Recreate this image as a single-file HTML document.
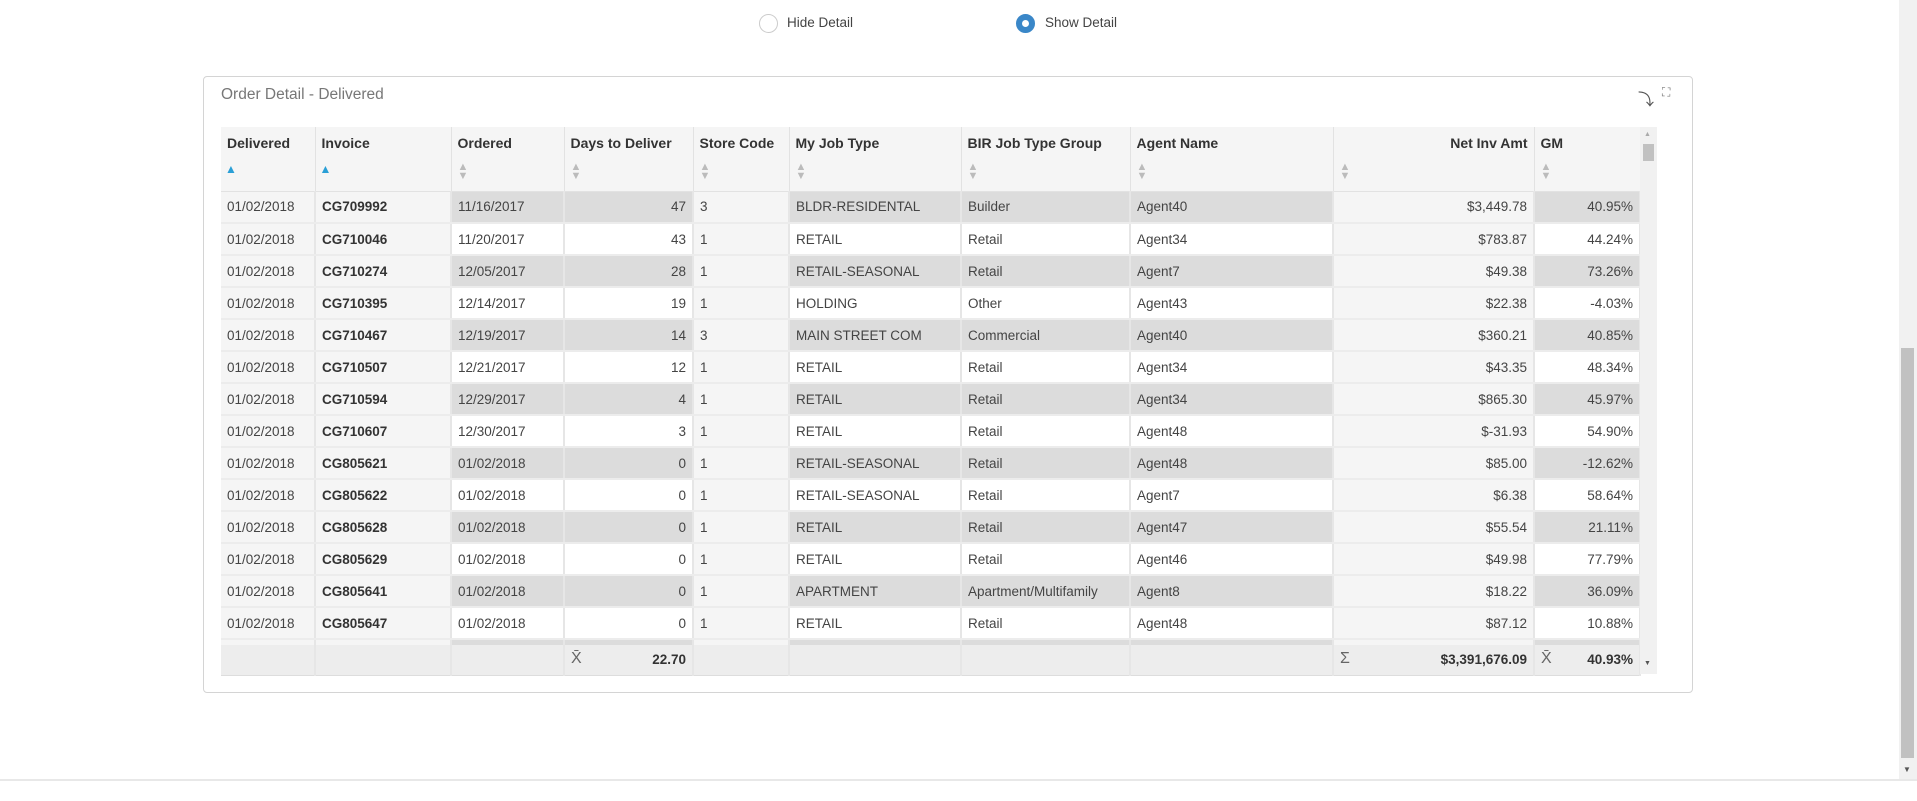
<!DOCTYPE html>
<html><head><meta charset="utf-8"><style>
*{box-sizing:border-box;margin:0;padding:0}
body{width:1917px;height:801px;background:#fff;font-family:"Liberation Sans",sans-serif;position:relative;overflow:hidden;color:#444}
.radio{position:absolute;top:14px;width:19px;height:19px;border-radius:50%;border:1px solid #ccc;background:#fff}
.radio.on{background:#3a87c8;border-color:#3a87c8}
.radio.on::after{content:"";position:absolute;left:5px;top:5px;width:7px;height:7px;border-radius:50%;background:#fff}
.rl{position:absolute;top:15px;font-size:13.5px;color:#444}
.panel{position:absolute;left:203px;top:76px;width:1490px;height:617px;border:1px solid #d4d4d4;border-radius:4px}
.title{position:absolute;left:17px;top:9px;font-size:15.5px;color:#777}
table{position:absolute;left:221px;top:127px;border-collapse:collapse;table-layout:fixed;font-size:13.5px}
td,th{height:32px;padding:0 6px;white-space:nowrap;overflow:hidden;border-right:2px solid #e6e6e6;border-bottom:2px solid #ececec}
th{height:64px;background:#f5f5f5;text-align:left;vertical-align:top;padding-top:8px;font-weight:bold;color:#333;font-size:14px;position:relative;border-color:#e2e2e2;border-width:1px}
th .s{position:absolute;left:6px;top:36px;font-size:11px;line-height:9px;color:#bbb}
th .a{position:absolute;left:4px;top:35px;color:#2a9fd6;font-size:12px}
td.r{text-align:right}
td.b{font-weight:bold;color:#333}
tr.o td{background:#dcdcdc}
tr.e td{background:#fff}
tr td.l{background:#f5f5f5}
tr.part td{height:6px;background:#dcdcdc;border-bottom:0}
tr.part td.l{background:#f5f5f5}
tr.f td{background:#ededed;height:30px;font-weight:bold;color:#333;border-bottom:1px solid #ddd;text-align:right;position:relative}
.sym{position:absolute;left:6px;top:5px;font-weight:normal;color:#666;font-size:16px}
</style></head><body>
<div class="radio" style="left:759px"></div><div class="rl" style="left:787px">Hide Detail</div>
<div class="radio on" style="left:1016px"></div><div class="rl" style="left:1045px">Show Detail</div>
<div class="panel"><div class="title">Order Detail - Delivered</div>
<div style="position:absolute;left:1434px;top:9px;font-size:16px;color:#555">⤵</div>
<div style="position:absolute;left:1458px;top:8px;font-size:12px;color:#777;letter-spacing:-1px">⛶</div>
</div>
<table>
<colgroup><col style="width:94px"><col style="width:136px"><col style="width:113px"><col style="width:129px"><col style="width:96px"><col style="width:172px"><col style="width:169px"><col style="width:203px"><col style="width:201px"><col style="width:106px"></colgroup>
<tr><th>Delivered<span class="a">▲</span></th><th>Invoice<span class="a">▲</span></th><th>Ordered<span class="s">▲<br>▼</span></th><th>Days to Deliver<span class="s">▲<br>▼</span></th><th>Store Code<span class="s">▲<br>▼</span></th><th>My Job Type<span class="s">▲<br>▼</span></th><th>BIR Job Type Group<span class="s">▲<br>▼</span></th><th>Agent Name<span class="s">▲<br>▼</span></th><th style="text-align:right">Net Inv Amt<span class="s">▲<br>▼</span></th><th>GM<span class="s">▲<br>▼</span></th></tr>
<tr class="o"><td class="l">01/02/2018</td><td class="l b">CG709992</td><td>11/16/2017</td><td class="r">47</td><td class="l">3</td><td>BLDR-RESIDENTAL</td><td>Builder</td><td>Agent40</td><td class="l r">$3,449.78</td><td class="r">40.95%</td></tr>
<tr class="e"><td class="l">01/02/2018</td><td class="l b">CG710046</td><td>11/20/2017</td><td class="r">43</td><td class="l">1</td><td>RETAIL</td><td>Retail</td><td>Agent34</td><td class="l r">$783.87</td><td class="r">44.24%</td></tr>
<tr class="o"><td class="l">01/02/2018</td><td class="l b">CG710274</td><td>12/05/2017</td><td class="r">28</td><td class="l">1</td><td>RETAIL-SEASONAL</td><td>Retail</td><td>Agent7</td><td class="l r">$49.38</td><td class="r">73.26%</td></tr>
<tr class="e"><td class="l">01/02/2018</td><td class="l b">CG710395</td><td>12/14/2017</td><td class="r">19</td><td class="l">1</td><td>HOLDING</td><td>Other</td><td>Agent43</td><td class="l r">$22.38</td><td class="r">-4.03%</td></tr>
<tr class="o"><td class="l">01/02/2018</td><td class="l b">CG710467</td><td>12/19/2017</td><td class="r">14</td><td class="l">3</td><td>MAIN STREET COM</td><td>Commercial</td><td>Agent40</td><td class="l r">$360.21</td><td class="r">40.85%</td></tr>
<tr class="e"><td class="l">01/02/2018</td><td class="l b">CG710507</td><td>12/21/2017</td><td class="r">12</td><td class="l">1</td><td>RETAIL</td><td>Retail</td><td>Agent34</td><td class="l r">$43.35</td><td class="r">48.34%</td></tr>
<tr class="o"><td class="l">01/02/2018</td><td class="l b">CG710594</td><td>12/29/2017</td><td class="r">4</td><td class="l">1</td><td>RETAIL</td><td>Retail</td><td>Agent34</td><td class="l r">$865.30</td><td class="r">45.97%</td></tr>
<tr class="e"><td class="l">01/02/2018</td><td class="l b">CG710607</td><td>12/30/2017</td><td class="r">3</td><td class="l">1</td><td>RETAIL</td><td>Retail</td><td>Agent48</td><td class="l r">$-31.93</td><td class="r">54.90%</td></tr>
<tr class="o"><td class="l">01/02/2018</td><td class="l b">CG805621</td><td>01/02/2018</td><td class="r">0</td><td class="l">1</td><td>RETAIL-SEASONAL</td><td>Retail</td><td>Agent48</td><td class="l r">$85.00</td><td class="r">-12.62%</td></tr>
<tr class="e"><td class="l">01/02/2018</td><td class="l b">CG805622</td><td>01/02/2018</td><td class="r">0</td><td class="l">1</td><td>RETAIL-SEASONAL</td><td>Retail</td><td>Agent7</td><td class="l r">$6.38</td><td class="r">58.64%</td></tr>
<tr class="o"><td class="l">01/02/2018</td><td class="l b">CG805628</td><td>01/02/2018</td><td class="r">0</td><td class="l">1</td><td>RETAIL</td><td>Retail</td><td>Agent47</td><td class="l r">$55.54</td><td class="r">21.11%</td></tr>
<tr class="e"><td class="l">01/02/2018</td><td class="l b">CG805629</td><td>01/02/2018</td><td class="r">0</td><td class="l">1</td><td>RETAIL</td><td>Retail</td><td>Agent46</td><td class="l r">$49.98</td><td class="r">77.79%</td></tr>
<tr class="o"><td class="l">01/02/2018</td><td class="l b">CG805641</td><td>01/02/2018</td><td class="r">0</td><td class="l">1</td><td>APARTMENT</td><td>Apartment/Multifamily</td><td>Agent8</td><td class="l r">$18.22</td><td class="r">36.09%</td></tr>
<tr class="e"><td class="l">01/02/2018</td><td class="l b">CG805647</td><td>01/02/2018</td><td class="r">0</td><td class="l">1</td><td>RETAIL</td><td>Retail</td><td>Agent48</td><td class="l r">$87.12</td><td class="r">10.88%</td></tr>
<tr class="part"><td class="l"></td><td class="l"></td><td></td><td></td><td class="l"></td><td></td><td></td><td></td><td class="l"></td><td></td></tr>
<tr class="f"><td></td><td></td><td></td><td><span class="sym">X̄</span>22.70</td><td></td><td></td><td></td><td></td><td><span class="sym">Σ</span>$3,391,676.09</td><td><span class="sym">X̄</span>40.93%</td></tr>
</table>
<div style="position:absolute;left:1640px;top:127px;width:17px;height:547px;background:#f1f1f1"></div>
<div style="position:absolute;left:1644px;top:131px;font-size:7px;color:#aaa">▲</div>
<div style="position:absolute;left:1643px;top:144px;width:11px;height:17px;background:#c1c1c1"></div>
<div style="position:absolute;left:1644px;top:660px;font-size:7px;color:#555">▼</div>
<div style="position:absolute;left:1899px;top:0;width:18px;height:779px;background:#f1f1f1"></div>
<div style="position:absolute;left:1901px;top:348px;width:13px;height:410px;background:#c1c1c1"></div>
<div style="position:absolute;left:1903px;top:765px;font-size:8px;color:#555">▼</div>
<div style="position:absolute;left:0;top:779px;width:1917px;height:2px;background:#e8e8e8"></div>
</body></html>
